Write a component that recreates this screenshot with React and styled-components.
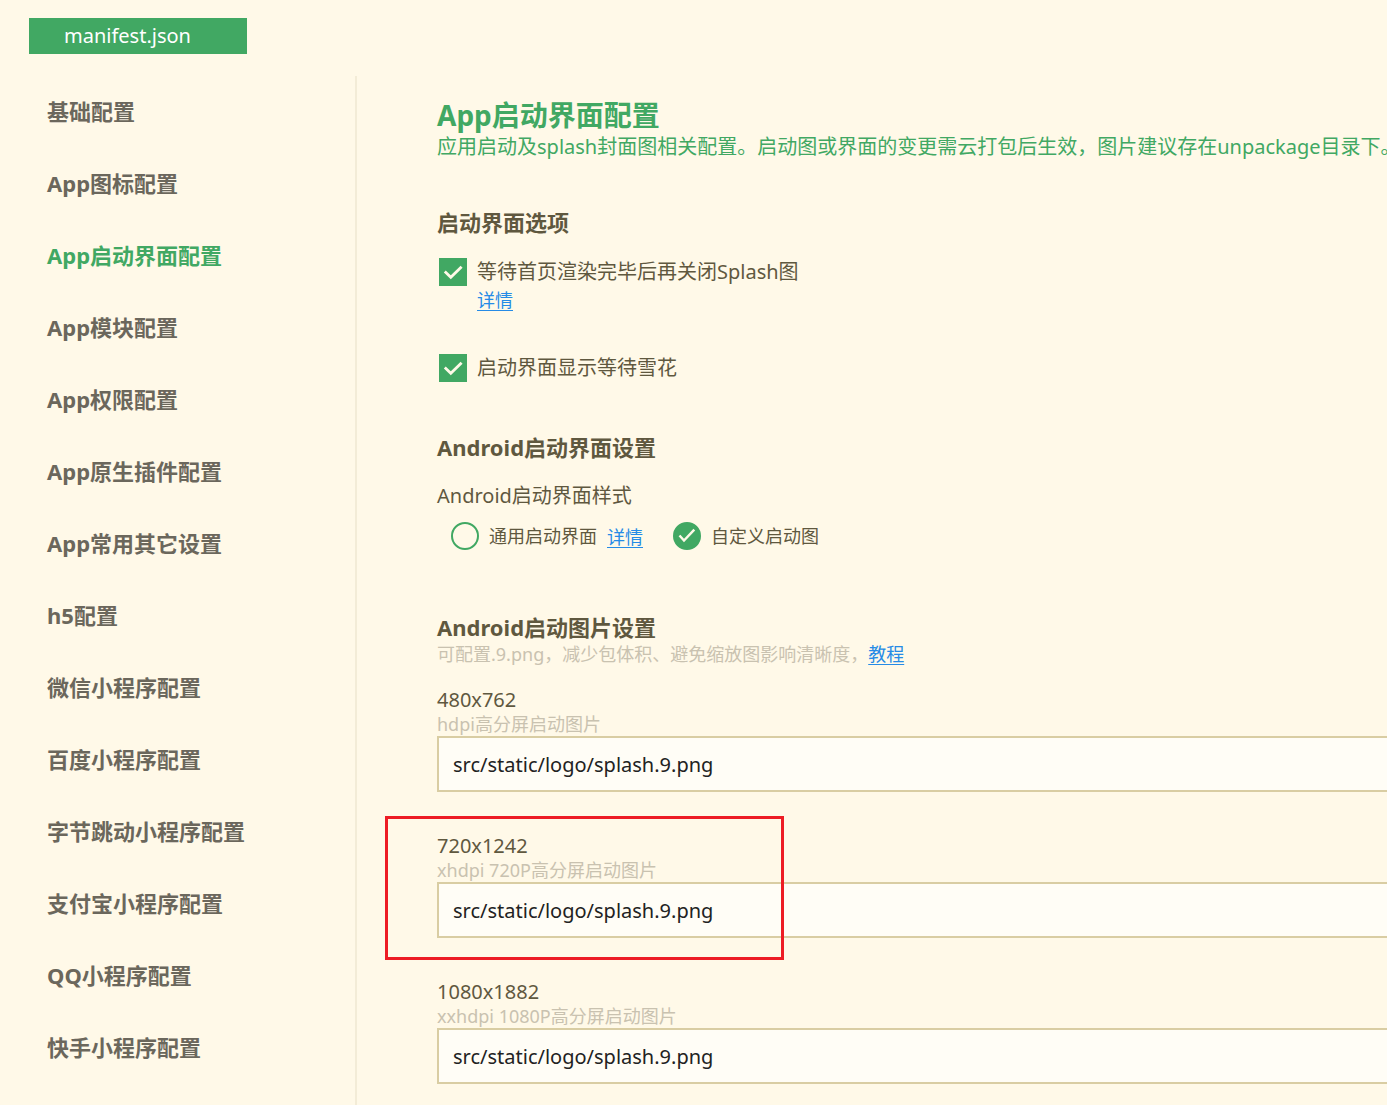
import React from 'react';
import styled, { createGlobalStyle, css } from 'styled-components';

const GlobalStyle = createGlobalStyle`
  :root {
    --color-bg: #fff9e8;
    --color-green: #41a863;
    --color-menu: #6b675c;
    --color-text: #5f583f;
    --color-hint: #c9c2b0;
    --color-link: #268be6;
    --color-border: #d9cda3;
    --color-divider: #f3ecd7;
    --fs-sm: 18px;
    --fs-md: 20px;
    --fs-lg: 22px;
    --fs-xl: 28px;
  }

  * {
    box-sizing: border-box;
  }

  body {
    margin: 0;
    background: var(--color-bg);
    color: var(--color-text);
    font-family: 'Noto Sans', 'Noto Sans CJK SC', sans-serif;
    font-size: var(--fs-md);
  }
`;

const Page = styled.div`
  display: flex;
  flex-direction: column;
  height: 100vh;
  overflow: hidden;
`;

const TabBar = styled.header`
  flex: none;
  padding: 18px 29px 22px;
`;

const Tab = styled.button`
  display: block;
  width: 218px;
  height: 36px;
  padding: 0 35px;
  border: 0;
  background: var(--color-green);
  color: #fff;
  font-family: inherit;
  font-size: var(--fs-md);
  line-height: 36px;
  text-align: left;
`;

const Body = styled.div`
  display: flex;
  flex: 1;
  min-height: 0;
`;

const Sidebar = styled.nav`
  flex: none;
  width: 357px;
  padding-left: 47px;
  border-right: 2px solid var(--color-divider);
`;

const MenuLink = styled.a`
  display: block;
  padding-bottom: 2px;
  color: ${({ $active }) => ($active ? 'var(--color-green)' : 'var(--color-menu)')};
  font-size: var(--fs-lg);
  font-weight: 700;
  line-height: 70px;
  text-decoration: none;
  white-space: nowrap;
`;

const Main = styled.main`
  flex: 1;
  min-width: 0;
  padding: 23px 0 0 80px;
  overflow: hidden;
`;

const Title = styled.h1`
  margin: 0;
  color: var(--color-green);
  font-size: var(--fs-xl);
  line-height: 32px;
`;

const Description = styled.p`
  margin: 0;
  color: var(--color-green);
  line-height: 32px;
  white-space: nowrap;
`;

const Section = styled.section`
  padding-top: ${({ $gap }) => $gap}px;
`;

const SectionTitle = styled.h2`
  margin: 0;
  padding-bottom: 2px;
  font-size: var(--fs-lg);
  line-height: 26px;
`;

const Hint = styled.p`
  margin: 0;
  color: var(--color-hint);
  font-size: var(--fs-sm);
  line-height: 24px;
`;

const Link = styled.a`
  color: var(--color-link);
  font-size: var(--fs-sm);
  text-underline-offset: 3px;
`;

const Options = styled.div`
  display: flex;
  flex-direction: column;
  gap: 40px;
  padding: 21px 0 0 2px;
`;

const OptionDetail = styled.div`
  padding-left: 38px;
  line-height: 28px;
`;

const ChoiceLabel = styled.label`
  display: flex;
  align-items: center;
  gap: 10px;
  font-size: ${({ $small }) => ($small ? 'var(--fs-sm)' : 'var(--fs-md)')};
  line-height: 28px;
`;

const Mark = styled.span`
  display: grid;
  flex: none;
  width: 28px;
  height: 28px;

  > * {
    grid-area: 1 / 1;
  }
`;

const Control = styled.input`
  appearance: none;
  width: 28px;
  height: 28px;
  margin: 0;
  border: 2px solid var(--color-green);

  ${({ type }) =>
    type === 'radio' &&
    css`
      border-radius: 50%;
    `}

  &:checked {
    background: var(--color-green);
  }
`;

const Tick = styled.svg`
  fill: none;
  stroke: var(--color-bg);
  pointer-events: none;

  ${Control}:not(:checked) + & {
    visibility: hidden;
  }
`;

const StyleOptions = styled.fieldset`
  min-width: 0;
  margin: 0;
  padding: 20px 0 0;
  border: 0;
`;

const Legend = styled.legend`
  float: left;
  width: 100%;
  padding: 0;
  line-height: 28px;
`;

const Radios = styled.div`
  display: flex;
  clear: both;
  gap: 30px;
  padding: 12px 0 0 14px;
`;

const RadioItem = styled.div`
  display: flex;
  align-items: center;
  gap: 10px;
`;

const Fields = styled.div`
  display: flex;
  flex-direction: column;
  gap: 42px;
  padding-top: 22px;
`;

const Field = styled.div`
  position: relative;
`;

const FieldLabel = styled.label`
  display: block;
  line-height: 24px;
`;

const PathInput = styled.input`
  display: block;
  width: 100%;
  height: 56px;
  padding: 0 14px;
  border: 2px solid var(--color-border);
  border-right: 0;
  border-radius: 0;
  background: #fffdf6;
  color: #222;
  font-family: inherit;
  font-size: var(--fs-md);
  outline: none;
`;

const Highlight = styled.div`
  position: absolute;
  top: -18px;
  bottom: -22px;
  left: -52px;
  width: 399px;
  border: 3px solid #ed1c24;
  pointer-events: none;
`;

const menu = [
  '基础配置',
  'App图标配置',
  'App启动界面配置',
  'App模块配置',
  'App权限配置',
  'App原生插件配置',
  'App常用其它设置',
  'h5配置',
  '微信小程序配置',
  '百度小程序配置',
  '字节跳动小程序配置',
  '支付宝小程序配置',
  'QQ小程序配置',
  '快手小程序配置',
];

const images = [
  { size: '480x762', hint: 'hdpi高分屏启动图片' },
  { size: '720x1242', hint: 'xhdpi 720P高分屏启动图片', highlight: true },
  { size: '1080x1882', hint: 'xxhdpi 1080P高分屏启动图片' },
];

const Choice = ({ type, name, checked, small, children }) => (
  <ChoiceLabel $small={small}>
    <Mark>
      <Control type={type} name={name} defaultChecked={checked} />
      <Tick viewBox="0 0 28 28" strokeWidth={type === 'radio' ? 2.4 : 2.8}>
        <path d={type === 'radio' ? 'M6.5 13.5l4.5 5L21.3 7.6' : 'M5.8 13.6l6 5.6L22.6 8.8'} />
      </Tick>
    </Mark>
    {children}
  </ChoiceLabel>
);

const ImageField = ({ size, hint, highlight }) => (
  <Field>
    <FieldLabel htmlFor={size}>{size}</FieldLabel>
    <Hint id={`${size}-hint`}>{hint}</Hint>
    <PathInput
      id={size}
      type="text"
      defaultValue="src/static/logo/splash.9.png"
      aria-describedby={`${size}-hint`}
    />
    {highlight && <Highlight />}
  </Field>
);

const App = () => (
  <>
    <GlobalStyle />
    <Page>
      <TabBar>
        <Tab type="button">manifest.json</Tab>
      </TabBar>
      <Body>
        <Sidebar>
          {menu.map(item => (
            <MenuLink key={item} href="#" $active={item === 'App启动界面配置'}>
              {item}
            </MenuLink>
          ))}
        </Sidebar>
        <Main>
          <Title>App启动界面配置</Title>
          <Description>
            应用启动及splash封面图相关配置。启动图或界面的变更需云打包后生效，图片建议存在unpackage目录下。
          </Description>

          <Section $gap={46}>
            <SectionTitle>启动界面选项</SectionTitle>
            <Options>
              <div>
                <Choice type="checkbox" name="wait" checked>
                  等待首页渲染完毕后再关闭Splash图
                </Choice>
                <OptionDetail>
                  <Link href="#">详情</Link>
                </OptionDetail>
              </div>
              <Choice type="checkbox" name="spinner" checked>
                启动界面显示等待雪花
              </Choice>
            </Options>
          </Section>

          <Section $gap={52}>
            <SectionTitle>Android启动界面设置</SectionTitle>
            <StyleOptions>
              <Legend>Android启动界面样式</Legend>
              <Radios>
                <RadioItem>
                  <Choice type="radio" name="style" small>
                    通用启动界面
                  </Choice>
                  <Link href="#">详情</Link>
                </RadioItem>
                <Choice type="radio" name="style" checked small>
                  自定义启动图
                </Choice>
              </Radios>
            </StyleOptions>
          </Section>

          <Section $gap={64}>
            <SectionTitle>Android启动图片设置</SectionTitle>
            <Hint>
              可配置.9.png，减少包体积、避免缩放图影响清晰度，<Link href="#">教程</Link>
            </Hint>
            <Fields>
              {images.map(image => (
                <ImageField key={image.size} {...image} />
              ))}
            </Fields>
          </Section>
        </Main>
      </Body>
    </Page>
  </>
);

export default App;
